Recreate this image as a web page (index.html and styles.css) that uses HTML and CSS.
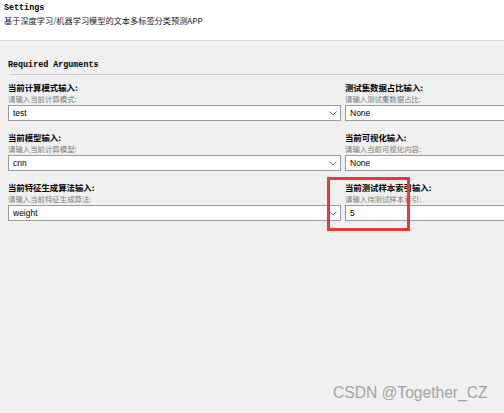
FILE: index.html
```html
<!DOCTYPE html>
<html lang="zh-CN">
<head>
  <meta charset="UTF-8">
  <title>Settings</title>
  <link rel="stylesheet" href="styles.css">
</head>
<body>
  <div class="header">
    <div class="title">Settings</div>
    <div class="subtitle">基于深度学习/机器学习模型的文本多标签分类预测APP</div>
  </div>

  <div class="main">
    <div class="section-title">Required Arguments</div>

    <div class="grid">
      <div class="field">
        <div class="label">当前计算模式输入:</div>
        <div class="hint">请输入当前计算模式:</div>
        <div class="input combo">test
          <svg class="chevron" width="8" height="5" viewBox="0 0 8 5"><path d="M0.5 0.5 L4 4 L7.5 0.5" fill="none" stroke="#707070" stroke-width="1"/></svg>
        </div>
      </div>
      <div class="field">
        <div class="label">测试集数据占比输入:</div>
        <div class="hint">请输入测试集数据占比:</div>
        <div class="input open">None</div>
      </div>

      <div class="field">
        <div class="label">当前模型输入:</div>
        <div class="hint">请输入当前计算模型:</div>
        <div class="input combo">cnn
          <svg class="chevron" width="8" height="5" viewBox="0 0 8 5"><path d="M0.5 0.5 L4 4 L7.5 0.5" fill="none" stroke="#707070" stroke-width="1"/></svg>
        </div>
      </div>
      <div class="field">
        <div class="label">当前可视化输入:</div>
        <div class="hint">请输入当前可视化内容:</div>
        <div class="input open">None</div>
      </div>

      <div class="field">
        <div class="label">当前特征生成算法输入:</div>
        <div class="hint">请输入当前特征生成算法:</div>
        <div class="input combo">weight
          <svg class="chevron" width="8" height="5" viewBox="0 0 8 5"><path d="M0.5 0.5 L4 4 L7.5 0.5" fill="none" stroke="#707070" stroke-width="1"/></svg>
        </div>
      </div>
      <div class="field">
        <div class="label">当前测试样本索引输入:</div>
        <div class="hint">请输入待测试样本索引:</div>
        <div class="input open">5</div>
      </div>
    </div>
  </div>

  <!-- annotation box and watermark sit over the form -->
  <div class="highlight"></div>
  <div class="watermark">CSDN @Together_CZ</div>
</body>
</html>
```

FILE: styles.css
```css
html, body {
  margin: 0;
  padding: 0;
  width: 504px;
  height: 413px;
  overflow: hidden;
  background-color: #f0f0f0;
  font-family: "Noto Sans CJK SC", "Liberation Sans", sans-serif;
  color: #000;
}
.header {
  height: 41px;
  box-sizing: border-box;
  padding: 2px 0 0 4px;
  background-color: #fff;
  border-bottom: 1px solid #d6d6d6;
}
.title {
  font-family: "Liberation Mono", monospace;
  font-weight: bold;
  font-size: 8.4px;
  line-height: 12px;
}
.subtitle {
  font-size: 8.2px;
  line-height: 12px;
  color: #222;
}
.main {
  padding-left: 8px;
}
.section-title {
  margin-top: 18px;
  margin-left: 2px;
  padding-bottom: 3px;
  border-bottom: 1px solid #c9c9c9;
  font-family: "Liberation Mono", monospace;
  font-weight: bold;
  font-size: 8.4px;
  line-height: 12px;
  text-indent: -2px;
}
.grid {
  display: grid;
  grid-template-columns: 333px 1fr;
  column-gap: 4px;
  margin-top: 6px;
}
.field {
  height: 50px;
  min-width: 0;
}
.label {
  font-size: 8.4px;
  font-weight: bold;
  line-height: 12px;
  white-space: nowrap;
}
.hint {
  font-size: 7.4px;
  line-height: 12px;
  color: #7a7a7a;
  white-space: nowrap;
}
.input {
  position: relative;
  height: 16px;
  box-sizing: border-box;
  padding: 0 4px;
  background-color: #fff;
  border: 1px solid #9a9a9a;
  font-family: "Liberation Sans", sans-serif;
  font-size: 8.5px;
  line-height: 14px;
}
.input.open {
  border-right: none;
}
.chevron {
  position: absolute;
  right: 3px;
  top: 5px;
}
.highlight {
  position: absolute;
  left: 327px;
  top: 177px;
  width: 83px;
  height: 54px;
  box-sizing: border-box;
  border: 3px solid #e8383b;
}
.watermark {
  position: absolute;
  left: 333px;
  top: 384px;
  font-family: "Liberation Sans", sans-serif;
  font-size: 15.6px;
  color: #a3a3a3;
}
```
